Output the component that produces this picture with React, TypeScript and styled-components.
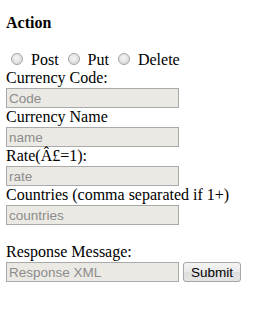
import React from 'react';
import styled, { createGlobalStyle } from 'styled-components';

const GlobalStyle = createGlobalStyle`
  html, body {
    margin: 0;
    padding: 0;
    background: #ffffff;
  }
  body {
    font-family: "Liberation Serif", "Times New Roman", serif;
    font-size: 16px;
    color: #000000;
  }
`;

const Form = styled.form`
  display: flex;
  flex-direction: column;
  align-items: flex-start;
  padding: 14px 0 0 6px;
  line-height: 18px;
`;

const Heading = styled.h4`
  margin: 0 0 19px;
  font-size: 16px;
  font-weight: bold;
  line-height: 18px;
`;

const RadioRow = styled.div`
  display: flex;
  align-items: flex-start;
  height: 18px;
`;

const RadioOption = styled.label`
  display: flex;
  align-items: flex-start;
  margin-right: 4px;
`;

const Radio = styled.input.attrs({ type: 'radio' })`
  appearance: none;
  box-sizing: border-box;
  width: 12px;
  height: 12px;
  margin: 2px 8px 0 5px;
  border: 1px solid #a4a4a4;
  border-radius: 50%;
  background: radial-gradient(circle at 45% 40%, #f6f6f6 0%, #e2e2e2 55%, #cfcfcf 100%);
`;

const FieldLabel = styled.div`
  height: 18px;
  white-space: nowrap;
`;

const Spacer = styled.div`
  height: 18px;
`;

const TextInput = styled.input.attrs({ type: 'text' })`
  box-sizing: border-box;
  width: 173px;
  height: 20px;
  margin: 1px 0 0;
  padding: 0 2px;
  border: 1px solid #a9a9a9;
  background: #ebe9e4;
  font-family: "Liberation Sans", Arial, sans-serif;
  font-size: 13.5px;
  color: #000;
  outline: none;

  &::placeholder {
    color: #8c8c8c;
  }
`;

const InputRow = styled.div`
  display: flex;
  align-items: flex-start;
  gap: 4px;
`;

const SubmitButton = styled.button`
  box-sizing: border-box;
  width: 58px;
  height: 20px;
  margin-top: 1px;
  padding: 0;
  border: 1px solid #a6a6a6;
  border-radius: 3px;
  background: linear-gradient(#f4f4f4, #e9e9e9 50%, #dedede 51%, #e4e4e4);
  font-family: "Liberation Sans", Arial, sans-serif;
  font-size: 13.5px;
  color: #000;
`;

const fields = [
  { label: 'Currency Code:', placeholder: 'Code' },
  { label: 'Currency Name', placeholder: 'name' },
  { label: 'Rate(Â£=1):', placeholder: 'rate' },
  { label: 'Countries (comma separated if 1+)', placeholder: 'countries' },
];

export default function App() {
  return (
    <>
      <GlobalStyle />
      <Form onSubmit={e => e.preventDefault()}>
        <Heading>Action</Heading>
        <RadioRow>
          {['Post', 'Put', 'Delete'].map(action => (
            <RadioOption key={action}>
              <Radio name="action" value={action.toLowerCase()} />
              {action}
            </RadioOption>
          ))}
        </RadioRow>
        {fields.map(field => (
          <React.Fragment key={field.placeholder}>
            <FieldLabel>{field.label}</FieldLabel>
            <TextInput placeholder={field.placeholder} />
          </React.Fragment>
        ))}
        <Spacer />
        <FieldLabel>Response Message:</FieldLabel>
        <InputRow>
          <TextInput placeholder="Response XML" />
          <SubmitButton type="submit">Submit</SubmitButton>
        </InputRow>
      </Form>
    </>
  );
}
